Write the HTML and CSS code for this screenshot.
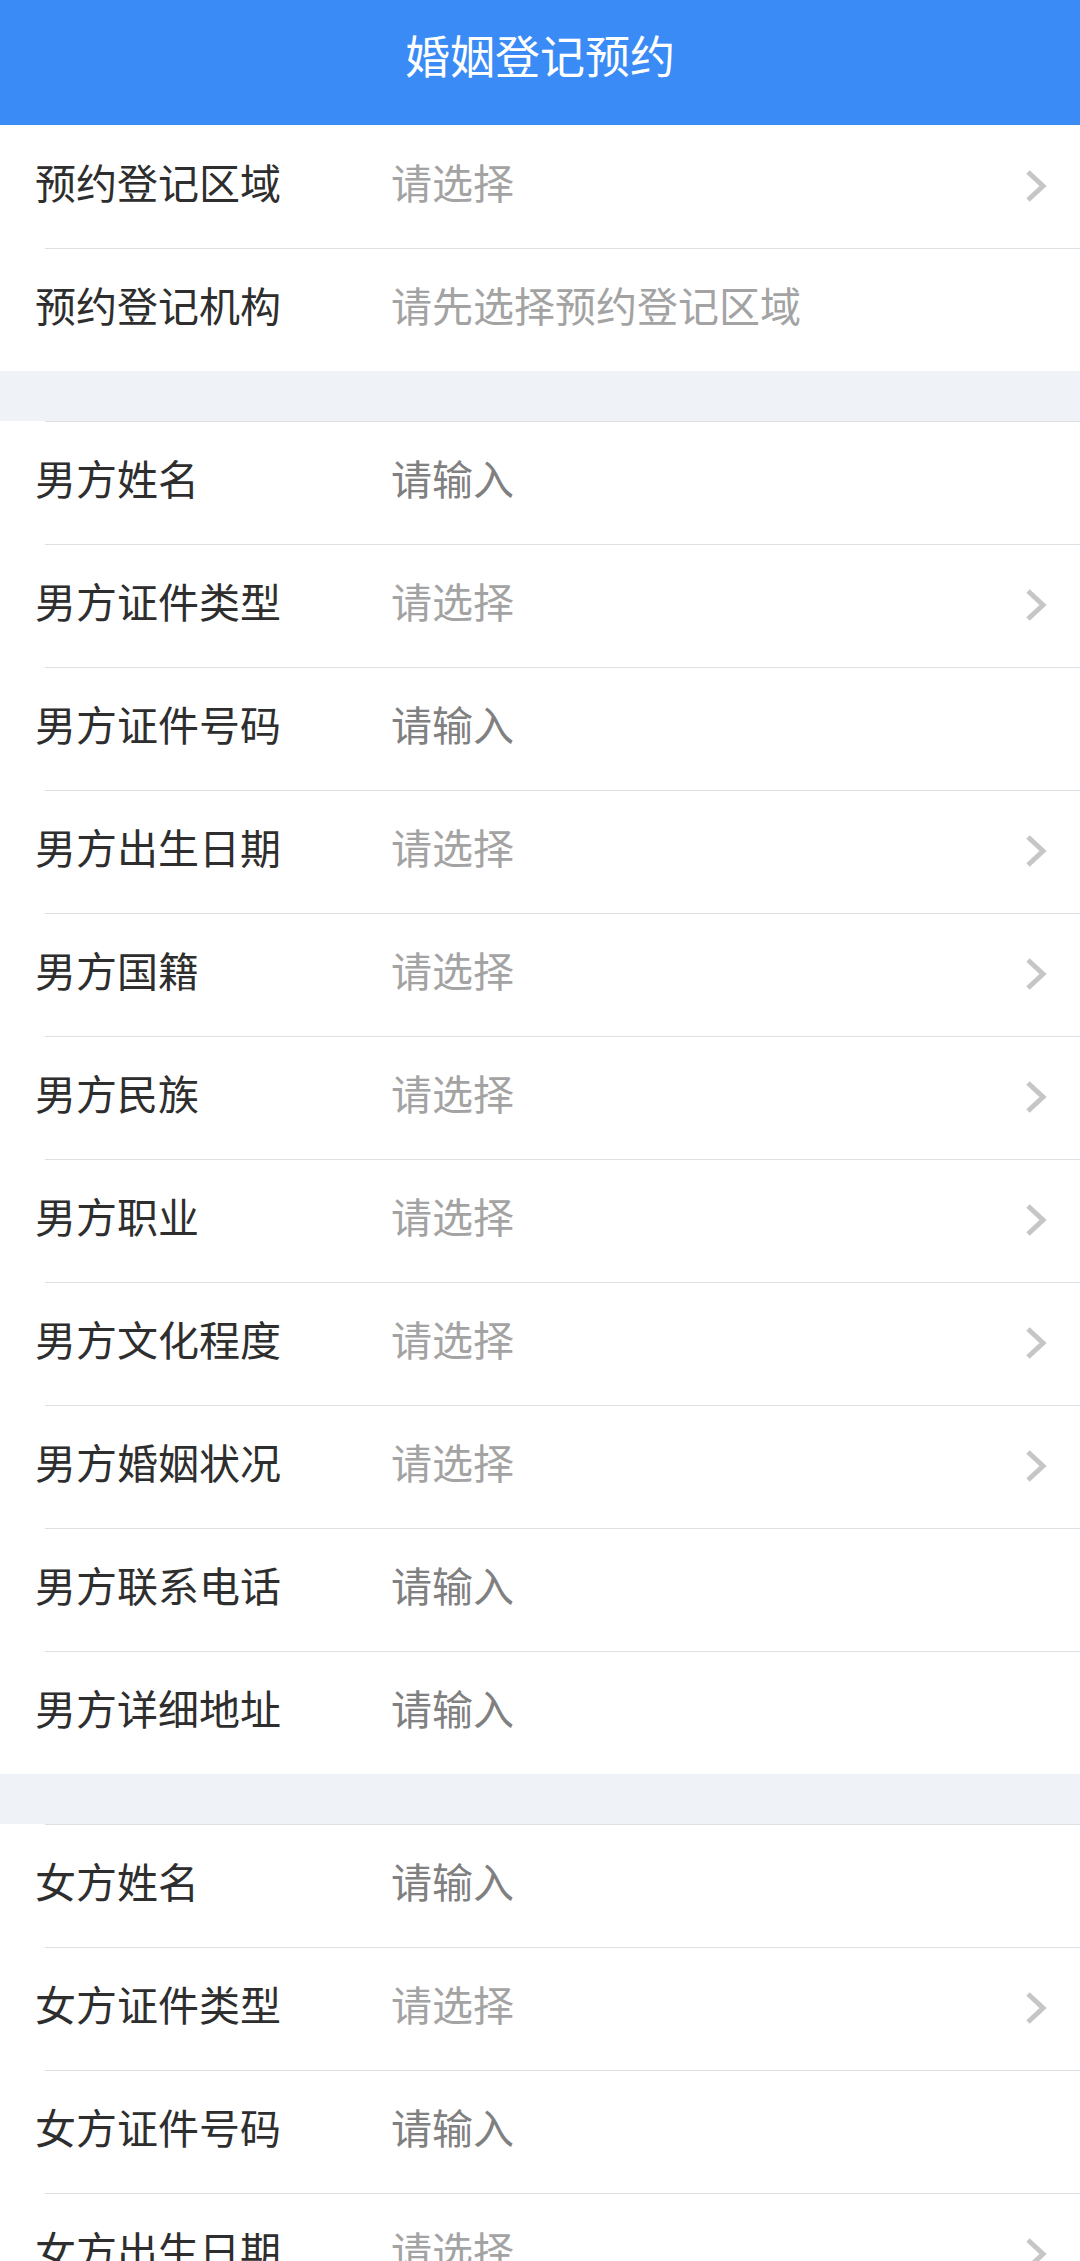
FILE: index.html
```html
<!DOCTYPE html>
<html lang="zh-CN">
<head>
<meta charset="UTF-8" />
<meta name="viewport" content="width=device-width, initial-scale=1" />
<title>婚姻登记预约</title>
<link rel="stylesheet" href="styles.css">
</head>
<body>

<header class="topbar">
  <h1 class="topbar-title">婚姻登记预约</h1>
</header>

<!-- 预约信息 -->
<div class="group">
  <div class="cell">
    <span class="cell-label">预约登记区域</span>
    <span class="cell-value pick">请选择</span>
    <svg class="arrow" viewBox="0 0 22 34"><polyline points="3,3 18,17 3,31" /></svg>
  </div>
  <div class="cell">
    <span class="cell-label">预约登记机构</span>
    <span class="cell-value pick">请先选择预约登记区域</span>
  </div>
</div>

<!-- 男方信息 -->
<div class="group">
  <div class="cell">
    <span class="cell-label">男方姓名</span>
    <span class="cell-value">请输入</span>
  </div>
  <div class="cell">
    <span class="cell-label">男方证件类型</span>
    <span class="cell-value pick">请选择</span>
    <svg class="arrow" viewBox="0 0 22 34"><polyline points="3,3 18,17 3,31" /></svg>
  </div>
  <div class="cell">
    <span class="cell-label">男方证件号码</span>
    <span class="cell-value">请输入</span>
  </div>
  <div class="cell">
    <span class="cell-label">男方出生日期</span>
    <span class="cell-value pick">请选择</span>
    <svg class="arrow" viewBox="0 0 22 34"><polyline points="3,3 18,17 3,31" /></svg>
  </div>
  <div class="cell">
    <span class="cell-label">男方国籍</span>
    <span class="cell-value pick">请选择</span>
    <svg class="arrow" viewBox="0 0 22 34"><polyline points="3,3 18,17 3,31" /></svg>
  </div>
  <div class="cell">
    <span class="cell-label">男方民族</span>
    <span class="cell-value pick">请选择</span>
    <svg class="arrow" viewBox="0 0 22 34"><polyline points="3,3 18,17 3,31" /></svg>
  </div>
  <div class="cell">
    <span class="cell-label">男方职业</span>
    <span class="cell-value pick">请选择</span>
    <svg class="arrow" viewBox="0 0 22 34"><polyline points="3,3 18,17 3,31" /></svg>
  </div>
  <div class="cell">
    <span class="cell-label">男方文化程度</span>
    <span class="cell-value pick">请选择</span>
    <svg class="arrow" viewBox="0 0 22 34"><polyline points="3,3 18,17 3,31" /></svg>
  </div>
  <div class="cell">
    <span class="cell-label">男方婚姻状况</span>
    <span class="cell-value pick">请选择</span>
    <svg class="arrow" viewBox="0 0 22 34"><polyline points="3,3 18,17 3,31" /></svg>
  </div>
  <div class="cell">
    <span class="cell-label">男方联系电话</span>
    <span class="cell-value">请输入</span>
  </div>
  <div class="cell">
    <span class="cell-label">男方详细地址</span>
    <span class="cell-value">请输入</span>
  </div>
</div>

<!-- 女方信息 -->
<div class="group">
  <div class="cell">
    <span class="cell-label">女方姓名</span>
    <span class="cell-value">请输入</span>
  </div>
  <div class="cell">
    <span class="cell-label">女方证件类型</span>
    <span class="cell-value pick">请选择</span>
    <svg class="arrow" viewBox="0 0 22 34"><polyline points="3,3 18,17 3,31" /></svg>
  </div>
  <div class="cell">
    <span class="cell-label">女方证件号码</span>
    <span class="cell-value">请输入</span>
  </div>
  <div class="cell">
    <span class="cell-label">女方出生日期</span>
    <span class="cell-value pick">请选择</span>
    <svg class="arrow" viewBox="0 0 22 34"><polyline points="3,3 18,17 3,31" /></svg>
  </div>
  <div class="cell">
    <span class="cell-label">女方国籍</span>
    <span class="cell-value pick">请选择</span>
    <svg class="arrow" viewBox="0 0 22 34"><polyline points="3,3 18,17 3,31" /></svg>
  </div>
</div>

</body>
</html>
```

FILE: styles.css
```css
body {
  margin: 0;
  background: #eff2f7;
  font-family: "Noto Sans CJK SC", "Noto Sans", sans-serif;
}

.topbar {
  height: 125px;
  box-sizing: border-box;
  padding-top: 32px;
  background: #3a8bf5;
  text-align: center;
}
.topbar-title {
  margin: 0;
  font-size: 45px;
  line-height: 46px;
  font-weight: 400;
  color: #fff;
}

.group { background: #fff; }
.group + .group { margin-top: 50px; }

.cell {
  display: flex;
  align-items: center;
  height: 123px;
  box-sizing: border-box;
  padding: 0 33px 12px 35px;
  /* separator line, indented */
  background: linear-gradient(#dedfe2, #dedfe2) 45px 0 / 100% 1px no-repeat;
}
.topbar + .group .cell:first-child { background: none; }

.cell-label {
  width: 356px;
  flex-shrink: 0;
  font-size: 41px;
  color: #2e2e2e;
}
.cell-value {
  flex: 1;
  font-size: 41px;
  color: #808080;
}
.cell-value.pick { color: #a3a3a3; }

.arrow {
  width: 22px;
  height: 34px;
  margin-top: 10px;
  fill: none;
  stroke: #c6c6c6;
  stroke-width: 5;
}
```
